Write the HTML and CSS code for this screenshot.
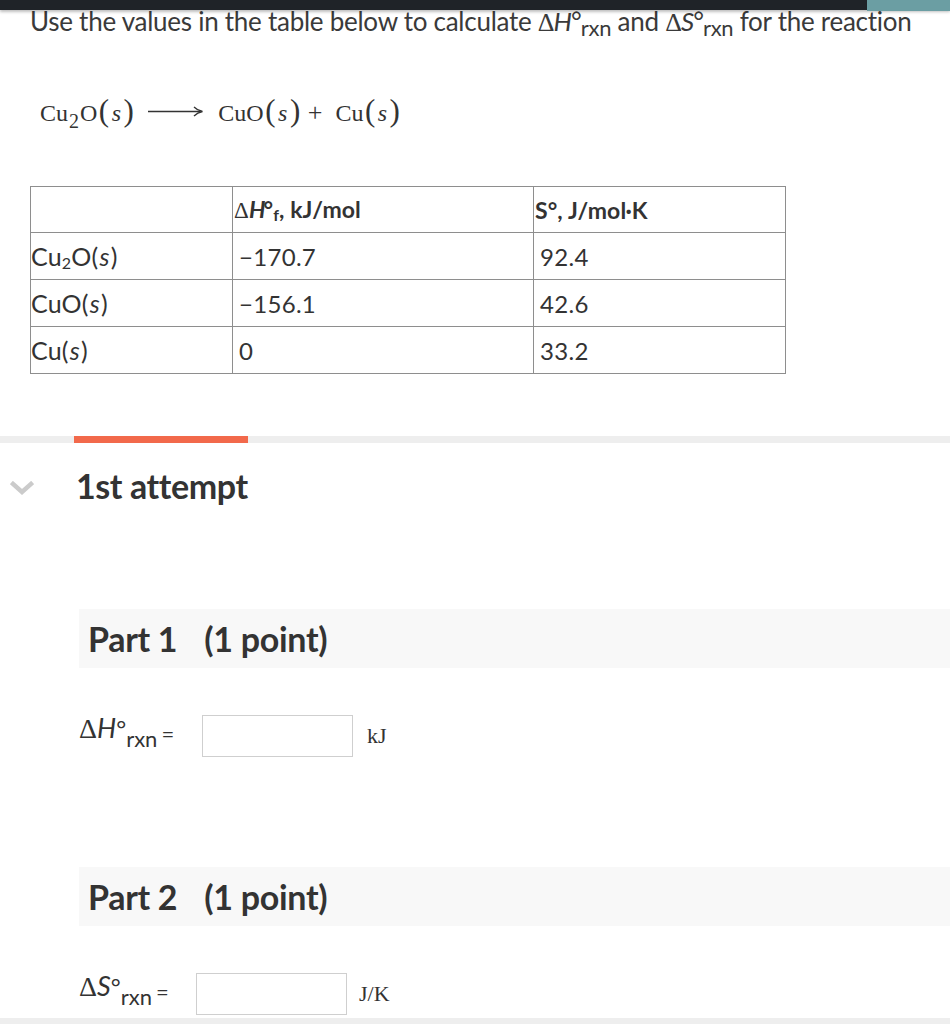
FILE: index.html
```html
<!DOCTYPE html>
<html>
<head>
<meta charset="utf-8">
<link rel="stylesheet" href="styles.css">
</head>
<body>
<div class="topbar"><div class="topbar-accent"></div></div>
<div class="question">
  <p class="prompt">Use the values in the table below to calculate <span class="math"><span class="delta">Δ</span><i>H</i>°<sub>rxn</sub></span> and <span class="math"><span class="delta">Δ</span><i>S</i>°<sub>rxn</sub></span> for the reaction</p>
  <div class="equation"><span>Cu<sub>2</sub>O</span><span class="paren">(</span><i class="s">s</i><span class="paren">)</span><svg class="arrow" width="55" height="14" viewBox="0 0 55 14"><path d="M0 7.5 H52" stroke="#333" stroke-width="1.3" fill="none"/><path d="M46 3 Q49.5 6.5 54.5 7.5 Q49.5 8.5 46 12" stroke="#333" stroke-width="1.3" fill="none"/></svg><span>CuO</span><span class="paren">(</span><i class="s">s</i><span class="paren">)</span><span class="plus">+</span><span>Cu</span><span class="paren">(</span><i class="s">s</i><span class="paren">)</span></div>
  <table class="data">
    <tr class="head"><th class="c1"></th><th class="c2"><span class="delta">Δ</span><i>H</i><span class="deg">°</span><sub>f</sub>, kJ/mol</th><th class="c3">S°, J/mol·K</th></tr>
    <tr><td>Cu<sub>2</sub>O(<i>s</i>)</td><td class="num">−170.7</td><td class="num">92.4</td></tr>
    <tr><td>CuO(<i>s</i>)</td><td class="num">−156.1</td><td class="num">42.6</td></tr>
    <tr><td>Cu(<i>s</i>)</td><td class="num">0</td><td class="num">33.2</td></tr>
  </table>
</div>
<div class="progress"><div class="progress-fill"></div></div>
<div class="attempt">
  <svg class="chevron" width="24" height="16" viewBox="0 0 24 16"><path d="M3 3 L12 11 L21 3" fill="none" stroke="#cbcbcb" stroke-width="4.5" stroke-linecap="square"/></svg>
  <h2 class="attempt-title">1st attempt</h2>
</div>
<section class="part">
  <div class="part-head"><span>Part 1</span><span class="pts">(1 point)</span></div>
  <div class="answer">
    <span class="label"><span class="delta">Δ</span><i>H</i><span class="deg">°</span><sub>rxn</sub><span class="eq">=</span></span>
    <span class="field"></span>
    <span class="unit">kJ</span>
  </div>
</section>
<section class="part part2">
  <div class="part-head"><span>Part 2</span><span class="pts">(1 point)</span></div>
  <div class="answer">
    <span class="label"><span class="delta">Δ</span><i>S</i><span class="deg">°</span><sub>rxn</sub><span class="eq">=</span></span>
    <span class="field"></span>
    <span class="unit">J/K</span>
  </div>
</section>
<div class="bottomline"></div>
</body>
</html>
```
FILE: styles.css
```css
html, body { margin: 0; padding: 0; background: #fff; }
body { font-family: Lato, "Open Sans", sans-serif; color: #3a3a3a; width: 950px; height: 1024px; overflow: hidden; }

.topbar { height: 10px; background: #1f2328; display: flex; justify-content: flex-end; box-shadow: 0 2px 3px rgba(0,0,0,0.25); position: relative; }
.topbar-accent { width: 83px; height: 11px; background: #6b9ea3; }

.question { padding-left: 30px; }
.prompt { margin: -4px 0 0 0; font-size: 26px; line-height: 30px; letter-spacing: -0.26px; white-space: nowrap; color: #3a3a3a; }
.prompt sub { font-size: 22px; vertical-align: -5px; line-height: 0; letter-spacing: -0.3px; }
.prompt i { font-style: italic; }
.math { letter-spacing: -1px; }

.delta { font-family: "Liberation Serif", "DejaVu Serif", serif; font-weight: 400; }

.equation { font-family: "Liberation Serif", "DejaVu Serif", serif; font-size: 24px; color: #333; padding-left: 10px; margin-top: 53px; height: 40px; display: flex; align-items: baseline; line-height: 40px; }
.equation sub { font-size: 20px; vertical-align: -7px; line-height: 0; margin: 0 1px; }
.equation .paren { font-size: 31px; margin: 0 1.5px; line-height: 40px; }
.equation .s { font-size: 24px; margin: 0 1px; }
.equation .arrow { align-self: center; margin: 0 15px 0 13px; }
.equation .plus { font-size: 26px; margin: 0 13px 0 6px; }

.data { border-collapse: collapse; margin-top: 55px; width: 756px; font-size: 24px; color: #333; }
.data th, .data td { border: 1px solid #8e8e8e; height: 46px; padding: 0 1px; text-align: left; vertical-align: middle; }
.data .head th { height: 45px; }
.data th { font-weight: 700; font-size: 23px; letter-spacing: 0.1px; }
.data th .deg { margin-left: -2px; }
.data .c1 { width: 199px; }
.data .c2 { width: 298px; }
.data sub { font-size: 16px; vertical-align: -3px; line-height: 0; }
.data td { font-size: 25px; letter-spacing: 0.2px; padding-left: 0; }
.data td i { margin: 0 1px; }
.data .num { font-size: 24px; padding-left: 6px; letter-spacing: 0.3px; }

.progress { margin-top: 62px; height: 7px; background: #eeeeee; }
.progress-fill { margin-left: 74px; width: 174px; height: 7px; background: #f2694b; }

.attempt { display: flex; align-items: center; height: 90px; box-sizing: border-box; padding-bottom: 6px; }
.chevron { margin-left: 10px; margin-top: 8px; }
.attempt-title { margin: 0 0 0 42px; font-size: 34px; font-weight: 700; color: #333; letter-spacing: -0.4px; }

.part { margin-top: 76px; }
.part2 { margin-top: 110px; }
.part-head { margin-left: 79px; height: 59px; background: #f8f8f8; display: flex; align-items: center; padding-left: 9px; font-size: 34px; font-weight: 700; color: #333; letter-spacing: -0.3px; gap: 27px; }
.answer { display: flex; align-items: center; margin-left: 79px; margin-top: 47px; height: 42px; }
.label { font-size: 27px; color: #333; width: 123px; white-space: nowrap; display: flex; align-items: baseline; position: relative; top: -8px; }
.label .delta { font-size: 28px; }
.label i { font-style: italic; }
.label .deg { font-size: 24px; }
.label sub { font-size: 22px; line-height: 0; position: relative; top: 9px; }
.label .eq { font-size: 22px; margin-left: 4px; position: relative; top: 4px; }
.field { display: inline-block; width: 149px; height: 40px; border: 1px solid #cfcfcf; background: #fff; }
.unit { font-family: "Liberation Serif", "DejaVu Serif", serif; font-size: 22px; color: #333; margin-left: 14px; }
.part2 .label { width: 117px; }
.part2 .unit { margin-left: 12px; }

.bottomline { margin-top: 3px; height: 7px; background: #eeeeee; }
```
